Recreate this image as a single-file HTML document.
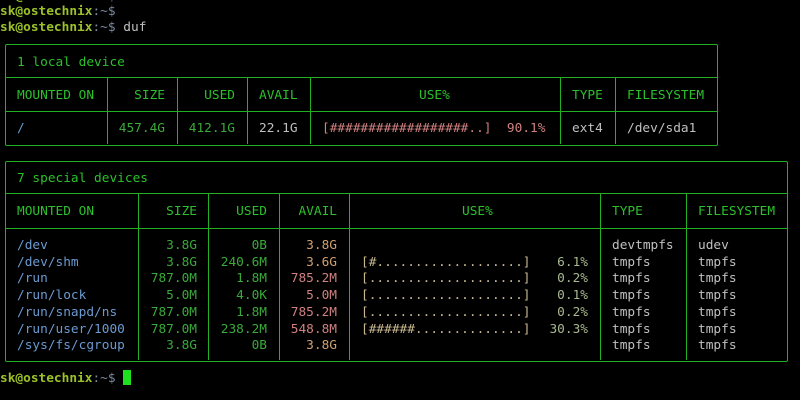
<!DOCTYPE html><html><head><style>
body{margin:0;width:800px;height:400px;background:#000;overflow:hidden;position:relative;font-family:"DejaVu Sans Mono","Liberation Mono",monospace;font-size:12.8px;}
.t{position:absolute;white-space:pre;line-height:16px}
.b{position:absolute;border:1px solid #22b022}
.h{position:absolute;height:1px;background:#22b022}
.v{position:absolute;width:1px;background:#22b022}
.g{color:#2cc02c}.d{color:#3aaa3a}.p{color:#6a9ad0}.w{color:#c0c0c0}.y{color:#c8b890}.r{color:#d08080}.o{color:#cfa070}.pc{color:#a8b890}
.u{color:#9cc22a;font-weight:bold}.s{color:#7a8aa0}
.R{text-align:right}
</style></head><body>
<div class="t" style="left:0;top:-11px"><span class="u">sk@ostechnix</span><span class="s">:~$</span></div>
<div class="t" style="left:0;top:4px"><span class="u">sk@ostechnix</span><span class="s">:~$</span></div>
<div class="t" style="left:0;top:20px"><span class="u">sk@ostechnix</span><span class="s">:~$</span> <span class="w">duf</span></div>

<div class="b" style="left:5px;top:44px;width:711px;height:100px;border-radius:2px"></div>
<div class="h" style="left:5px;top:77px;width:712px"></div>
<div class="h" style="left:5px;top:111px;width:712px"></div>
<div class="v" style="left:107px;top:77px;height:67px"></div>
<div class="v" style="left:177px;top:77px;height:67px"></div>
<div class="v" style="left:247px;top:77px;height:67px"></div>
<div class="v" style="left:310px;top:77px;height:67px"></div>
<div class="v" style="left:560px;top:77px;height:67px"></div>
<div class="v" style="left:615px;top:77px;height:67px"></div>
<div class="t g" style="left:17px;top:55px">1 local device</div>
<div class="t g" style="left:17px;top:88px">MOUNTED ON</div>
<div class="t g R" style="left:107px;width:58px;top:88px">SIZE</div>
<div class="t g R" style="left:177px;width:58px;top:88px">USED</div>
<div class="t g" style="left:259px;top:88px">AVAIL</div>
<div class="t g" style="left:419px;top:88px">USE%</div>
<div class="t g" style="left:572px;top:88px">TYPE</div>
<div class="t g" style="left:627px;top:88px">FILESYSTEM</div>
<div class="t p" style="left:17px;top:121px">/</div>
<div class="t d R" style="left:107px;width:58px;top:121px">457.4G</div>
<div class="t d R" style="left:177px;width:58px;top:121px">412.1G</div>
<div class="t w" style="left:259px;top:121px">22.1G</div>
<div class="t r" style="left:322px;top:121px">[##################..]  90.1%</div>
<div class="t w" style="left:572px;top:121px">ext4</div>
<div class="t w" style="left:627px;top:121px">/dev/sda1</div>

<div class="b" style="left:5px;top:161px;width:781px;height:199px;border-radius:2px"></div>
<div class="h" style="left:5px;top:193px;width:782px"></div>
<div class="h" style="left:5px;top:228px;width:782px"></div>
<div class="v" style="left:138px;top:193px;height:167px"></div>
<div class="v" style="left:208px;top:193px;height:167px"></div>
<div class="v" style="left:279px;top:193px;height:167px"></div>
<div class="v" style="left:349px;top:193px;height:167px"></div>
<div class="v" style="left:600px;top:193px;height:167px"></div>
<div class="v" style="left:686px;top:193px;height:167px"></div>
<div class="t g" style="left:17px;top:171px">7 special devices</div>
<div class="t g" style="left:17px;top:204px">MOUNTED ON</div>
<div class="t g R" style="left:138px;width:59px;top:204px">SIZE</div>
<div class="t g R" style="left:208px;width:59px;top:204px">USED</div>
<div class="t g R" style="left:279px;width:58px;top:204px">AVAIL</div>
<div class="t g" style="left:462px;top:204px">USE%</div>
<div class="t g" style="left:612px;top:204px">TYPE</div>
<div class="t g" style="left:698px;top:204px">FILESYSTEM</div>
<div class="t p" style="left:17px;top:238px;line-height:16.7px">/dev
/dev/shm
/run
/run/lock
/run/snapd/ns
/run/user/1000
/sys/fs/cgroup</div>
<div class="t d R" style="left:138px;width:59px;top:238px;line-height:16.7px">3.8G
3.8G
787.0M
5.0M
787.0M
787.0M
3.8G</div>
<div class="t d R" style="left:208px;width:59px;top:238px;line-height:16.7px">0B
240.6M
1.8M
4.0K
1.8M
238.2M
0B</div>
<div class="t R" style="left:279px;width:58px;top:238px;line-height:16.7px"><span class="o">3.8G</span>
<span class="o">3.6G</span>
<span class="r">785.2M</span>
<span class="r">5.0M</span>
<span class="r">785.2M</span>
<span class="r">548.8M</span>
<span class="o">3.8G</span></div>
<div class="t y" style="left:361px;top:238px;line-height:16.7px">
[#...................]
[....................]
[....................]
[....................]
[######..............]</div>
<div class="t pc R" style="left:540px;width:48px;top:238px;line-height:16.7px">
6.1%
0.2%
0.1%
0.2%
30.3%</div>
<div class="t w" style="left:612px;top:238px;line-height:16.7px">devtmpfs
tmpfs
tmpfs
tmpfs
tmpfs
tmpfs
tmpfs</div>
<div class="t w" style="left:698px;top:238px;line-height:16.7px">udev
tmpfs
tmpfs
tmpfs
tmpfs
tmpfs
tmpfs</div>

<div class="t" style="left:0;top:370px"><span class="u">sk@ostechnix</span><span class="s">:~$</span> <span style="display:inline-block;width:8px;height:15px;background:#1ee01e;vertical-align:-3px"></span></div>
</body></html>
